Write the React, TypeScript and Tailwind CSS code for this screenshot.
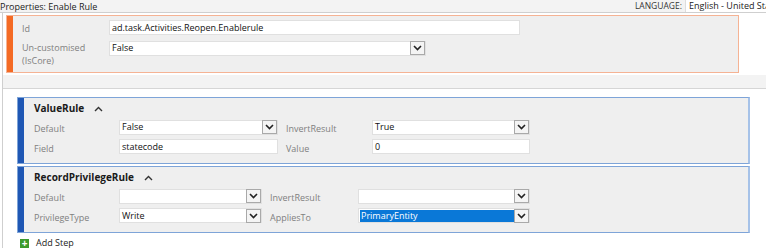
import React from 'react'

const FONT = { fontFamily: '"Segoe UI", "Open Sans", "Noto Sans", sans-serif' }

function Chevron() {
  return (
    <div className="w-[15px] h-[14px] shrink-0 border border-[#a9a9a9] bg-[#f4f4f4] flex items-center justify-center">
      <svg width="9" height="6" viewBox="0 0 9 6">
        <path d="M1 1 L4.5 4.5 L8 1" fill="none" stroke="#222" strokeWidth="1.6" />
      </svg>
    </div>
  )
}

function Select({ value, width, highlight }: { value: string; width: string; highlight?: boolean }) {
  return (
    <div className={`${width} h-[15px] flex items-center bg-white border border-[#e0e0e0]`}>
      <div className="flex-1 min-w-0 h-full flex items-center pl-[1px]">
        <span
          className={`h-[12px] leading-[12px] px-[1px] text-[9px] truncate ${
            highlight ? 'bg-[#0a78d7] text-white w-full' : 'text-[#111]'
          }`}
        >
          {value}
        </span>
      </div>
      <Chevron />
    </div>
  )
}

function Input({ value, width }: { value: string; width: string }) {
  return (
    <div className={`${width} h-[15px] flex items-center bg-white border border-[#e0e0e0] px-[2px] text-[9px] text-[#111]`}>
      {value}
    </div>
  )
}

function RuleBox({
  title,
  rows,
  labelW,
  inputW,
  label2W,
}: {
  title: string
  rows: { l1: string; f1: React.ReactNode; l2: string; f2: React.ReactNode }[]
  labelW: string
  inputW: string
  label2W: string
}) {
  return (
    <div className="ml-[14px] w-[733px] flex border border-[#7ea4d8] border-r-[2px] border-r-[#a6c2e8] bg-[#efefef]">
      <div className="w-[6px] shrink-0 bg-[#1f57b4]" />
      <div className="flex-1 pl-[10px] pt-[2px] pb-[8px]">
        <div className="flex items-center gap-[10px] h-[17px]">
          <span className="text-[10px] font-bold text-[#1a1a1a]">{title}</span>
          <svg width="9" height="6" viewBox="0 0 9 6">
            <path d="M1 5 L4.5 1.5 L8 5" fill="none" stroke="#333" strokeWidth="1.4" />
          </svg>
        </div>
        <div className="flex flex-col gap-[3px] mt-[2px]">
          {rows.map((r) => (
            <div key={r.l1} className="flex items-center">
              <span className={`${labelW} text-[9px] text-[#808080] pt-[3px]`}>{r.l1}</span>
              <div className={inputW}>{r.f1}</div>
              <span className={`${label2W} pl-[8px] text-[9px] text-[#808080] pt-[3px]`}>{r.l2}</span>
              {r.f2}
            </div>
          ))}
        </div>
      </div>
    </div>
  )
}

export default function App() {
  return (
    <div className="w-[766px] h-[249px] overflow-hidden bg-white" style={FONT}>
      {/* header */}
      <div className="h-[13px] flex items-center justify-between bg-[#f3f3f3] border-b border-[#cfcfcf]">
        <span className="text-[9px] text-[#222] leading-none">Properties: Enable Rule</span>
        <div className="flex items-center h-full">
          <span className="text-[8.5px] text-[#333] mr-[3px] leading-none">LANGUAGE:</span>
          <div className="w-[81px] h-full bg-white border-l border-[#ddd] pl-[3px] text-[9px] text-[#222] whitespace-nowrap overflow-hidden leading-[12px]">
            English - United States
          </div>
        </div>
      </div>

      <div className="border-l border-[#cfcfcf] ml-[2px] pt-[2px]">
        {/* general section */}
        <div className="ml-[3px] w-[733px] h-[58px] flex border border-[#f5b394] bg-[#efefef]">
          <div className="w-[6px] shrink-0 bg-[#f46a24]" />
          <div className="flex-1 pl-[9px] pt-[4px] flex flex-col gap-[5px]">
            <div className="flex items-center">
              <span className="w-[87px] text-[9px] text-[#808080] pt-[2px]">Id</span>
              <Input value="ad.task.Activities.Reopen.Enablerule" width="w-[411px]" />
            </div>
            <div className="flex items-start">
              <span className="w-[87px] text-[9px] text-[#808080] leading-[13px]">
                Un-customised
                <br />
                (IsCore)
              </span>
              <Select value="False" width="w-[317px]" />
            </div>
          </div>
        </div>

        {/* strip */}
        <div className="mt-[2px] h-[14px] bg-[#f3f3f3] border-b border-[#d6d6d6]" />

        <div className="pt-[8px] flex flex-col gap-[2px]">
          <RuleBox
            title="ValueRule"
            labelW="w-[85px]"
            inputW="w-[159px]"
            label2W="w-[94px]"
            rows={[
              {
                l1: 'Default',
                f1: <Select value="False" width="w-[159px]" />,
                l2: 'InvertResult',
                f2: <Select value="True" width="w-[158px]" />,
              },
              {
                l1: 'Field',
                f1: <Input value="statecode" width="w-[159px]" />,
                l2: 'Value',
                f2: <Input value="0" width="w-[158px]" />,
              },
            ]}
          />
          <RuleBox
            title="RecordPrivilegeRule"
            labelW="w-[85px]"
            inputW="w-[143px]"
            label2W="w-[96px]"
            rows={[
              {
                l1: 'Default',
                f1: <Select value="" width="w-[143px]" />,
                l2: 'InvertResult',
                f2: <Select value="" width="w-[172px]" />,
              },
              {
                l1: 'PrivilegeType',
                f1: <Select value="Write" width="w-[143px]" />,
                l2: 'AppliesTo',
                f2: <Select value="PrimaryEntity" width="w-[172px]" highlight />,
              },
            ]}
          />
        </div>

        <div className="flex items-center gap-[7px] ml-[17px] mt-[5px]">
          <div className="w-[9px] h-[9px] bg-[#3c9a2c] flex items-center justify-center text-white text-[10px] font-bold leading-none">
            +
          </div>
          <span className="text-[9px] text-[#222] leading-[10px]">Add Step</span>
        </div>
      </div>
    </div>
  )
}
